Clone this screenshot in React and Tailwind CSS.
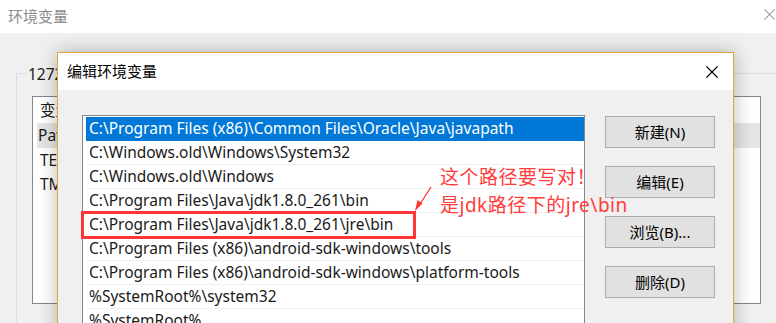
import React from 'react';

const paths = [
  'C:\\Program Files (x86)\\Common Files\\Oracle\\Java\\javapath',
  'C:\\Windows.old\\Windows\\System32',
  'C:\\Windows.old\\Windows',
  'C:\\Program Files\\Java\\jdk1.8.0_261\\bin',
  'C:\\Program Files\\Java\\jdk1.8.0_261\\jre\\bin',
  'C:\\Program Files (x86)\\android-sdk-windows\\tools',
  'C:\\Program Files (x86)\\android-sdk-windows\\platform-tools',
  '%SystemRoot%\\system32',
  '%SystemRoot%',
  '%SystemRoot%\\System32\\Wbem',
];

const buttons = ['新建(N)', '编辑(E)', '浏览(B)...', '删除(D)'];

const CloseIcon = ({ className }) => (
  <svg viewBox="0 0 12 12" className={className} fill="none" stroke="currentColor" strokeWidth="1.1">
    <path d="M0.5 0.5 L11.5 11.5 M11.5 0.5 L0.5 11.5" />
  </svg>
);

export default function App() {
  return (
    <div className="relative w-[776px] h-[323px] overflow-hidden bg-[#f0f0f0] font-['Noto_Sans','Noto_Sans_CJK_SC',sans-serif] text-[15px] text-[#1a1a1a]">
      {/* background window: 环境变量 */}
      <div className="flex items-center justify-between h-[33px] bg-white pl-2 pr-0">
        <span className="text-[#8c8c8c]">环境变量</span>
        <CloseIcon className="w-[11px] h-[11px] text-[#9a9a9a] mr-[1px] -mt-[5px]" />
      </div>
      <div className="relative ml-4 mt-[40px] border-l border-t border-[#dcdcdc] h-[260px] pt-[22px] pl-[15px]">
        <span className="absolute left-[10px] -top-[11px] bg-[#f0f0f0] px-[1px] leading-[22px] text-[15.5px]">1272</span>
        <div className="w-[729px] h-[208px] bg-white border border-[#828790] pt-[1px] pl-[4px] text-[15.5px]">
          <div className="h-[25px] leading-[25px] pl-[3px]">变量</div>
          <div className="h-[25px] leading-[25px] pl-[1px] bg-[#e5e5e5]">Path</div>
          <div className="h-[24px] leading-[24px] pl-[3px]">TEMP</div>
          <div className="h-[24px] leading-[24px] pl-[3px]">TMP</div>
        </div>
      </div>

      {/* dialog: 编辑环境变量 */}
      <div className="absolute left-[57px] top-[52px] w-[677px] h-[300px] border border-[#e9a23b] bg-[#f0f0f0] shadow-[0_0_18px_rgba(0,0,0,0.28)]">
        <div className="flex items-center justify-between h-[37px] bg-white pl-[9px] pr-[15px]">
          <span className="text-[15px] text-black">编辑环境变量</span>
          <CloseIcon className="w-[12px] h-[12px] text-black" />
        </div>
        <div className="flex pl-[24px] pt-[25px] gap-[20px]">
          <div className="w-[503px] h-[240px] bg-white border border-[#828790] pt-[1px] pl-[3px] overflow-hidden text-[15.5px]">
            {paths.map((p, i) => (
              <div
                key={i}
                className={`h-[24px] leading-[23px] pl-[3px] border-b whitespace-nowrap ${
                  i === 0 ? 'bg-[#0078d7] text-white border-[#0078d7]' : 'border-[#f0f0f0]'
                }`}
              >
                {p}
              </div>
            ))}
          </div>
          <div className="flex flex-col gap-[18px] pt-[1px]">
            {buttons.map((b) => (
              <button
                key={b}
                className="w-[110px] h-[32px] bg-[#e1e1e1] border border-[#adadad] text-[15px] text-black"
              >
                {b}
              </button>
            ))}
          </div>
        </div>
      </div>

      {/* annotation */}
      <div className="absolute left-[81px] top-[211px] w-[335px] h-[28px] border-[3px] border-[#ff3636]" />
      <svg className="absolute left-[410px] top-[184px] w-[26px] h-[32px]" viewBox="0 0 26 32">
        <path d="M21 3 L10 20" stroke="#ff3636" strokeWidth="1.3" fill="none" />
        <path d="M5 27 L7.5 16 L12.5 19.5 Z" fill="#ff3636" />
      </svg>
      <div className="absolute left-[440px] top-[163px] text-[19px] leading-[28px] tracking-[0.5px] text-[#ff3c3c]">
        <div>这个路径要写对！</div>
        <div>是jdk路径下的jre\bin</div>
      </div>
    </div>
  );
}
